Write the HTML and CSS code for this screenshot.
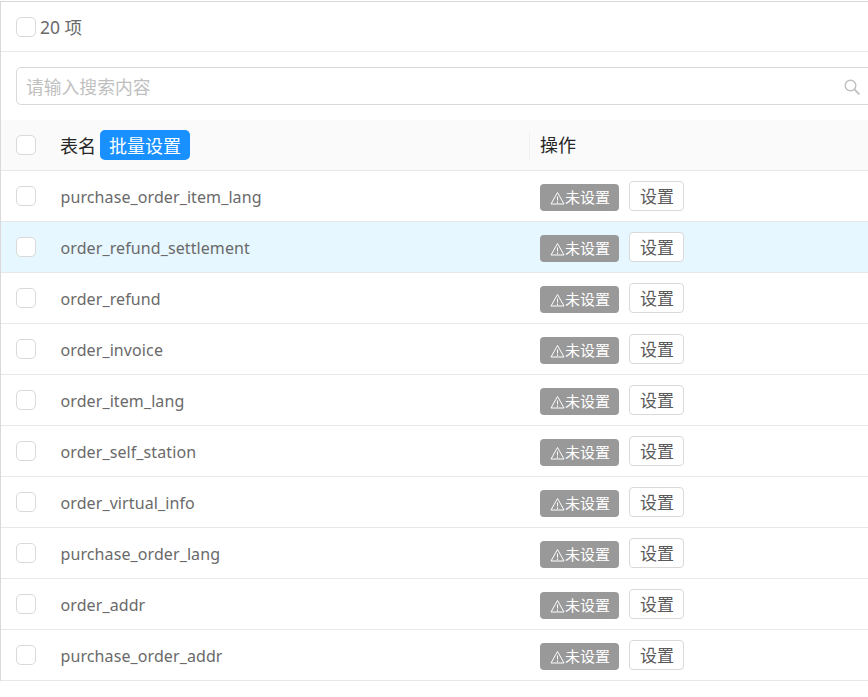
FILE: index.html
```html
<!DOCTYPE html>
<html lang="en">
<head>
    <meta charset="UTF-8">
    <meta name="viewport" content="width=device-width, initial-scale=1.0">
    <title>表名设置</title>
    <link rel="stylesheet" href="styles.css">
</head>
<body>
    <div class="panel">
        <div class="panel-head">
            <span class="check"></span>
            <span class="count">20 项</span>
        </div>
        <div class="search-wrap">
            <div class="search">
                <span class="search-text">请输入搜索内容</span>
                <svg class="search-icon" width="16" height="16" viewBox="0 0 16 16" fill="none" stroke="#bfbfbf" stroke-width="1.4">
                    <circle cx="6.5" cy="6.5" r="5.3"/>
                    <path d="M10.4 10.4 15.4 15.4" stroke-width="1.8"/>
                </svg>
            </div>
        </div>
        <div class="table-head">
            <div class="cell-check"><span class="check"></span></div>
            <div class="cell-name">
                <span>表名</span>
                <button class="batch">批量设置</button>
            </div>
            <div class="cell-action">操作</div>
        </div>
        <div class="row">
            <div class="cell-check"><span class="check"></span></div>
            <div class="cell-name">purchase_order_item_lang</div>
            <div class="cell-action"><span class="tag"><svg class="warn" width="15" height="14" viewBox="0 0 15 14" fill="none" stroke="#fff"><path d="M7.5 1.5 14 13H1Z"/><path d="M7.5 5.5V9.5M7.5 10.5V12"/></svg>未设置</span><button class="set">设置</button></div>
        </div>
        <div class="row active">
            <div class="cell-check"><span class="check"></span></div>
            <div class="cell-name">order_refund_settlement</div>
            <div class="cell-action"><span class="tag"><svg class="warn" width="15" height="14" viewBox="0 0 15 14" fill="none" stroke="#fff"><path d="M7.5 1.5 14 13H1Z"/><path d="M7.5 5.5V9.5M7.5 10.5V12"/></svg>未设置</span><button class="set">设置</button></div>
        </div>
        <div class="row">
            <div class="cell-check"><span class="check"></span></div>
            <div class="cell-name">order_refund</div>
            <div class="cell-action"><span class="tag"><svg class="warn" width="15" height="14" viewBox="0 0 15 14" fill="none" stroke="#fff"><path d="M7.5 1.5 14 13H1Z"/><path d="M7.5 5.5V9.5M7.5 10.5V12"/></svg>未设置</span><button class="set">设置</button></div>
        </div>
        <div class="row">
            <div class="cell-check"><span class="check"></span></div>
            <div class="cell-name">order_invoice</div>
            <div class="cell-action"><span class="tag"><svg class="warn" width="15" height="14" viewBox="0 0 15 14" fill="none" stroke="#fff"><path d="M7.5 1.5 14 13H1Z"/><path d="M7.5 5.5V9.5M7.5 10.5V12"/></svg>未设置</span><button class="set">设置</button></div>
        </div>
        <div class="row">
            <div class="cell-check"><span class="check"></span></div>
            <div class="cell-name">order_item_lang</div>
            <div class="cell-action"><span class="tag"><svg class="warn" width="15" height="14" viewBox="0 0 15 14" fill="none" stroke="#fff"><path d="M7.5 1.5 14 13H1Z"/><path d="M7.5 5.5V9.5M7.5 10.5V12"/></svg>未设置</span><button class="set">设置</button></div>
        </div>
        <div class="row">
            <div class="cell-check"><span class="check"></span></div>
            <div class="cell-name">order_self_station</div>
            <div class="cell-action"><span class="tag"><svg class="warn" width="15" height="14" viewBox="0 0 15 14" fill="none" stroke="#fff"><path d="M7.5 1.5 14 13H1Z"/><path d="M7.5 5.5V9.5M7.5 10.5V12"/></svg>未设置</span><button class="set">设置</button></div>
        </div>
        <div class="row">
            <div class="cell-check"><span class="check"></span></div>
            <div class="cell-name">order_virtual_info</div>
            <div class="cell-action"><span class="tag"><svg class="warn" width="15" height="14" viewBox="0 0 15 14" fill="none" stroke="#fff"><path d="M7.5 1.5 14 13H1Z"/><path d="M7.5 5.5V9.5M7.5 10.5V12"/></svg>未设置</span><button class="set">设置</button></div>
        </div>
        <div class="row">
            <div class="cell-check"><span class="check"></span></div>
            <div class="cell-name">purchase_order_lang</div>
            <div class="cell-action"><span class="tag"><svg class="warn" width="15" height="14" viewBox="0 0 15 14" fill="none" stroke="#fff"><path d="M7.5 1.5 14 13H1Z"/><path d="M7.5 5.5V9.5M7.5 10.5V12"/></svg>未设置</span><button class="set">设置</button></div>
        </div>
        <div class="row">
            <div class="cell-check"><span class="check"></span></div>
            <div class="cell-name">order_addr</div>
            <div class="cell-action"><span class="tag"><svg class="warn" width="15" height="14" viewBox="0 0 15 14" fill="none" stroke="#fff"><path d="M7.5 1.5 14 13H1Z"/><path d="M7.5 5.5V9.5M7.5 10.5V12"/></svg>未设置</span><button class="set">设置</button></div>
        </div>
        <div class="row">
            <div class="cell-check"><span class="check"></span></div>
            <div class="cell-name">purchase_order_addr</div>
            <div class="cell-action"><span class="tag"><svg class="warn" width="15" height="14" viewBox="0 0 15 14" fill="none" stroke="#fff"><path d="M7.5 1.5 14 13H1Z"/><path d="M7.5 5.5V9.5M7.5 10.5V12"/></svg>未设置</span><button class="set">设置</button></div>
        </div>
    </div>
</body>
</html>
```

FILE: styles.css
```css
html, body {
    margin: 0;
    height: 100%;
    overflow: hidden;
}

body {
    font-family: "Noto Sans", "Noto Sans CJK SC", sans-serif;
    font-size: 16px;
    color: #6a6a6a;
    background-color: #fff;
}

.panel {
    width: 880px;
    box-sizing: border-box;
    margin-top: 1px;
    border-top: 1px solid #d9d9d9;
    border-left: 1px solid #d9d9d9;
}

.panel-head {
    display: flex;
    align-items: center;
    height: 49px;
    padding-left: 15px;
    border-bottom: 1px solid #e8e8e8;
}

.count {
    margin-left: 4px;
    padding-bottom: 1px;
    color: #6a6a6a;
    font-size: 17.5px;
}

.check {
    display: block;
    width: 20px;
    height: 20px;
    box-sizing: border-box;
    border: 1px solid #d9d9d9;
    border-radius: 5px;
    background-color: #fff;
}

.search-wrap {
    height: 68px;
    box-sizing: border-box;
    padding: 15px 0 0 15px;
}

.search {
    display: flex;
    align-items: center;
    justify-content: space-between;
    height: 38px;
    box-sizing: border-box;
    padding: 0 19px 0 9px;
    border: 1px solid #d9d9d9;
    border-radius: 5px;
}

.search-text {
    padding-bottom: 1px;
    color: #bfbfbf;
    font-size: 17.8px;
}

.search-icon {
    margin-top: 1px;
}

.table-head,
.row {
    display: grid;
    grid-template-columns: 59px 469px 1fr;
    align-items: center;
    box-sizing: border-box;
    border-bottom: 1px solid #e8e8e8;
}

.table-head {
    height: 51px;
    background-color: #fafafa;
    color: #262626;
    font-size: 18px;
}

.row {
    height: 51px;
    font-size: 16px;
    letter-spacing: 0.1px;
}

.row.active {
    background-color: #e6f7ff;
}

.cell-check {
    padding-left: 15px;
}

.row .cell-name {
    padding: 2px 0 0 0.5px;
}

.table-head .cell-name {
    display: flex;
    align-items: center;
    gap: 4px;
}

.table-head .cell-action {
    height: 28px;
    line-height: 29px;
    border-left: 1px solid #f0f0f0;
    padding-left: 10px;
}

.row .cell-action {
    display: flex;
    align-items: flex-end;
    padding-left: 11px;
    letter-spacing: 0;
}

.batch {
    width: 90px;
    height: 30px;
    padding: 0;
    border: none;
    border-radius: 5px;
    background-color: #1890ff;
    color: #fff;
    font-family: inherit;
    font-size: 18px;
    cursor: pointer;
}

.tag {
    display: flex;
    align-items: center;
    justify-content: center;
    width: 79px;
    height: 27px;
    box-sizing: border-box;
    padding-left: 1px;
    line-height: 25px;
    border-radius: 4px;
    background-color: #999;
    color: #fff;
    font-size: 15px;
}

.warn {
    flex-shrink: 0;
}

.set {
    width: 55px;
    height: 30px;
    margin-left: 10px;
    padding: 0 0 1px 1px;
    border: 1px solid #d9d9d9;
    border-radius: 4px;
    background-color: #fff;
    color: #595959;
    font-family: inherit;
    font-size: 17px;
    cursor: pointer;
}
```
